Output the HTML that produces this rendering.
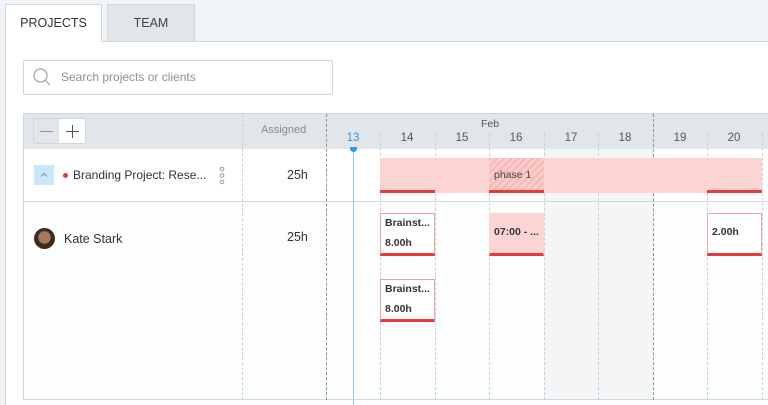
<!DOCTYPE html><html><head><style>
*{box-sizing:border-box;margin:0;padding:0}
body{width:768px;height:405px;background:#f0f4f7;font-family:"Liberation Sans",sans-serif;position:relative;overflow:hidden;color:#333}
.a{position:absolute}
.vl{position:absolute;width:0;border-left:1px dashed #c9d0d6}
.dk{border-left:1px dashed #8a939b}
.day{position:absolute;top:132px;width:54px;text-align:center;font-size:11.5px;color:#555}
.box{position:absolute;width:55px;height:43px;background:#fff;border:1px solid #f4a0a0;border-bottom:3px solid #e8393b;font-size:10.5px;font-weight:bold;color:#333;padding:3px 0 0 4px}
</style></head><body>
<div class="a" style="left:5px;top:41px;width:763px;height:364px;background:#fff;border-top:1px solid #cfd6dc;border-left:1px solid #cfd6dc"></div>
<div class="a" style="left:5px;top:4px;width:97px;height:38px;background:#fff;border:1px solid #cfd6dc;border-bottom:none;font-size:12.5px;color:#333;text-align:center;line-height:36px">PROJECTS</div>
<div class="a" style="left:107px;top:4px;width:88px;height:37px;background:#e1e6ea;border:1px solid #cfd6dc;border-bottom:none;font-size:12.5px;color:#444;text-align:center;line-height:36px">TEAM</div>
<div class="a" style="left:23px;top:60px;width:310px;height:35px;border:1px solid #cfd6dc;border-radius:2px"></div>
<svg class="a" style="left:32px;top:67px" width="20" height="20"><circle cx="8.5" cy="8.5" r="6.5" fill="none" stroke="#9aa3aa" stroke-width="1.2"/><line x1="13" y1="13" x2="18" y2="18" stroke="#9aa3aa" stroke-width="1.2"/></svg>
<div class="a" style="left:61px;top:70px;font-size:12px;color:#8a9096">Search projects or clients</div>
<div class="a" style="left:23px;top:113px;width:745px;height:287px;border:1px solid #cfd6dc;border-right:none;background:#fcfdfd"></div>
<div class="a" style="left:24px;top:114px;width:744px;height:35px;background:#e1e6ea"></div>
<div class="a" style="left:544px;top:149px;width:109px;height:250px;background:#f3f5f6"></div>
<div class="a" style="left:24px;top:149px;width:744px;height:53px;background:#fff"></div>
<div class="a" style="left:544px;top:149px;width:109px;height:53px;background:#f3f5f6"></div>
<div class="a" style="left:23px;top:201px;width:745px;border-top:1px solid #cfd6dc"></div>
<div class="a" style="left:33px;top:118px;width:53px;height:26px;border:1px solid #cfd6dc;border-radius:2px;background:#e1e6ea"></div>
<div class="a" style="left:59px;top:119px;width:26px;height:24px;background:#fff"></div>
<div class="a" style="left:40px;top:131px;width:13px;border-top:1.5px solid #8a939b"></div>
<div class="a" style="left:66px;top:131px;width:13px;border-top:1.5px solid #555"></div>
<div class="a" style="left:72px;top:125px;height:13px;border-left:1.5px solid #555"></div>
<div class="a" style="left:261px;top:124px;font-size:11px;color:#888">Assigned</div>
<div class="vl" style="left:242px;top:114px;height:286px"></div>
<div class="vl dk" style="left:326px;top:114px;height:286px"></div>
<div class="vl dk" style="left:653px;top:114px;height:286px"></div>
<div class="vl" style="left:380px;top:133px;height:267px"></div>
<div class="vl" style="left:435px;top:133px;height:267px"></div>
<div class="vl" style="left:489px;top:133px;height:267px"></div>
<div class="vl" style="left:544px;top:133px;height:267px"></div>
<div class="vl" style="left:598px;top:133px;height:267px"></div>
<div class="vl" style="left:707px;top:133px;height:267px"></div>
<div class="vl" style="left:762px;top:133px;height:267px"></div>
<div class="a" style="left:481px;top:118px;font-size:10.5px;color:#555">Feb</div>
<div class="day" style="left:326px;color:#2a9be0">13</div>
<div class="day" style="left:380px">14</div><div class="day" style="left:435px">15</div><div class="day" style="left:489px">16</div><div class="day" style="left:544px">17</div><div class="day" style="left:598px">18</div><div class="day" style="left:653px">19</div><div class="day" style="left:707px">20</div>
<div class="a" style="left:34px;top:165px;width:20px;height:20px;background:#c8e8f8"></div>
<svg class="a" style="left:38px;top:169px" width="12" height="12"><path d="M3 7.5L6 4.5L9 7.5" fill="none" stroke="#7a9fb3" stroke-width="1.2"/></svg>
<div class="a" style="left:63px;top:173px;width:5px;height:5px;border-radius:50%;background:#e8393b"></div>
<div class="a" style="left:73px;top:168px;font-size:12px;color:#333">Branding Project: Rese...</div>
<svg class="a" style="left:218px;top:166px" width="8" height="20"><circle cx="4" cy="3" r="1.8" fill="none" stroke="#999"/><circle cx="4" cy="9.5" r="1.8" fill="none" stroke="#999"/><circle cx="4" cy="16" r="1.8" fill="none" stroke="#999"/></svg>
<div class="a" style="left:287px;top:168px;font-size:12.5px">25h</div>
<div class="a" style="left:380px;top:158px;width:382px;height:35px;background:#fcd4d4"></div>
<div class="a" style="left:489px;top:158px;width:55px;height:35px;background:repeating-linear-gradient(135deg,#f6b7b7 0 2px,#fbcccc 2px 5px)"></div>
<div class="a" style="left:494px;top:169px;font-size:10.5px;color:#444">phase 1</div>
<div class="a" style="left:380px;top:190px;width:55px;height:3px;background:#e8393b"></div>
<div class="a" style="left:489px;top:190px;width:55px;height:3px;background:#e8393b"></div>
<div class="a" style="left:707px;top:190px;width:55px;height:3px;background:#e8393b"></div>
<div class="a" style="left:353px;top:149px;width:1px;height:256px;background:#8fcdf2"></div>
<div class="a" style="left:350px;top:147px;width:7px;height:5px;border-radius:0 0 4px 4px;background:#2a9be0"></div>
<div class="a" style="left:34px;top:228px;width:21px;height:21px;border-radius:50%;background:radial-gradient(circle at 50% 45%,#a67a5e 0 35%,#3a2a22 45%)"></div>
<div class="a" style="left:64px;top:232px;font-size:12.5px">Kate Stark</div>
<div class="a" style="left:287px;top:230px;font-size:12.5px">25h</div>
<div class="box" style="left:380px;top:213px">Brainst...<br><div style="margin-top:8px">8.00h</div></div>
<div class="box" style="left:489px;top:213px;background:#fcd4d4;border-color:#fcd4d4;border-bottom-color:#e8393b;padding-top:12px">07:00 - ...</div>
<div class="box" style="left:707px;top:213px;padding-top:12px">2.00h</div>
<div class="box" style="left:380px;top:279px">Brainst...<br><div style="margin-top:8px">8.00h</div></div>
</body></html>
